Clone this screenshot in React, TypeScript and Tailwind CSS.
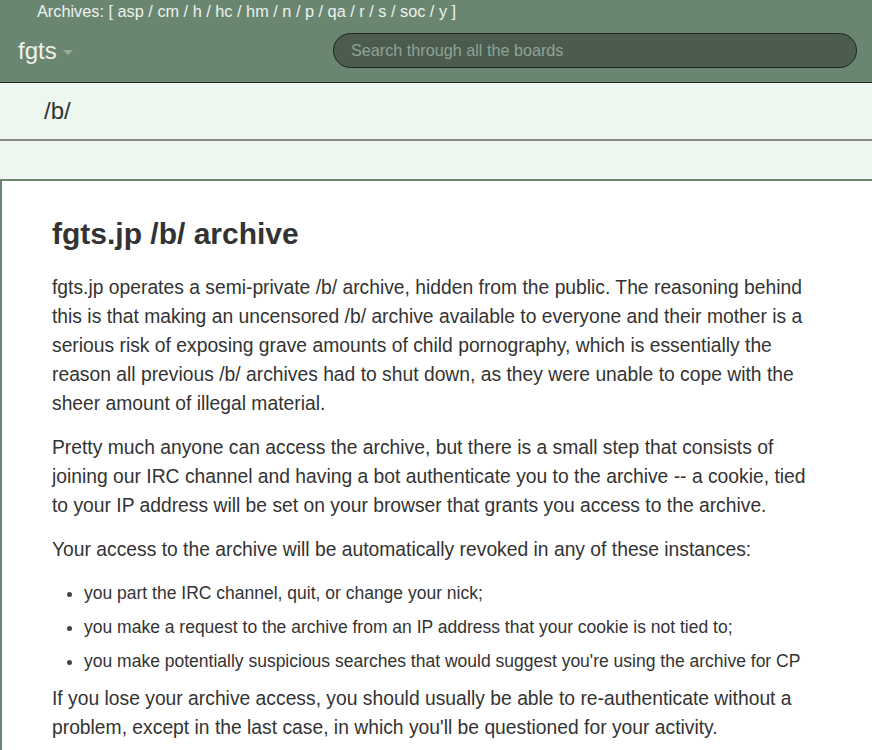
const boards = ["asp", "cm", "h", "hc", "hm", "n", "p", "qa", "r", "s", "soc", "y"];

function Navbar() {
  return (
    <header className="bg-[#6a8670] border-b border-[#1f2a22] h-[83px]">
      <div className="pl-[37px] pt-[1px] text-[16.3px] leading-[20px] text-[#eef2ee]">
        Archives: [{" "}
        {boards.map((b, i) => (
          <span key={b}>
            <a className="text-[#eef2ee]">{b}</a>
            {i < boards.length - 1 ? " / " : " "}
          </span>
        ))}
        ]
      </div>
      <div className="flex items-center mt-[12px]">
        <div className="flex items-center pl-[18px] w-[333px]">
          <span className="text-[24px] leading-[32px] text-[#eef2ee]">fgts</span>
          <span className="ml-[6px] mt-[3px] w-0 h-0 border-l-[5px] border-r-[5px] border-t-[5px] border-l-transparent border-r-transparent border-t-[#9aab9d]" />
        </div>
        <input
          placeholder="Search through all the boards"
          className="w-[524px] h-[35px] rounded-full bg-[#4b5c4e] border border-[#1c2620] pl-[17px] text-[16.2px] text-[#dfe6df] placeholder:text-[#8fa394] outline-none"
        />
      </div>
    </header>
  );
}

export default function App() {
  return (
    <div className="min-h-[750px] bg-[#edf7ef] font-['Liberation_Sans',Arial,sans-serif] text-[#333] overflow-hidden">
      <Navbar />
      <div className="h-[58px] flex items-center pl-[44px] border-b-2 border-[#888]">
        <h2 className="text-[24px] leading-[28px] text-[#333]">/b/</h2>
      </div>
      <div className="h-[38px]" />
      <main className="bg-white border-t-2 border-l-2 border-[#6a8670] pl-[50px] pr-[57px] pt-[33px] pb-10">
        <h1 className="text-[30px] leading-[40px] font-bold">fgts.jp /b/ archive</h1>
        <p className="mt-[19px] text-[19.3px] leading-[29px]">
          fgts.jp operates a semi-private /b/ archive, hidden from the public. The reasoning behind this is that making an
          uncensored /b/ archive available to everyone and their mother is a serious risk of exposing grave amounts of
          child pornography, which is essentially the reason all previous /b/ archives had to shut down, as they were
          unable to cope with the sheer amount of illegal material.
        </p>
        <p className="mt-[15px] text-[19.3px] leading-[29px]">
          Pretty much anyone can access the archive, but there is a small step that consists of joining our IRC channel
          and having a bot authenticate you to the archive -- a cookie, tied to your IP address will be set on your
          browser that grants you access to the archive.
        </p>
        <p className="mt-[15px] text-[19.3px] leading-[29px]">
          Your access to the archive will be automatically revoked in any of these instances:
        </p>
        <ul className="mt-[12px] pl-[32px] list-disc text-[17.5px] leading-[34px] marker:text-[#444]">
          <li>you part the IRC channel, quit, or change your nick;</li>
          <li>you make a request to the archive from an IP address that your cookie is not tied to;</li>
          <li>you make potentially suspicious searches that would suggest you're using the archive for CP</li>
        </ul>
        <p className="mt-[6px] text-[19.3px] leading-[29px]">
          If you lose your archive access, you should usually be able to re-authenticate without a problem, except in
          the last case, in which you'll be questioned for your activity.
        </p>
      </main>
    </div>
  );
}
